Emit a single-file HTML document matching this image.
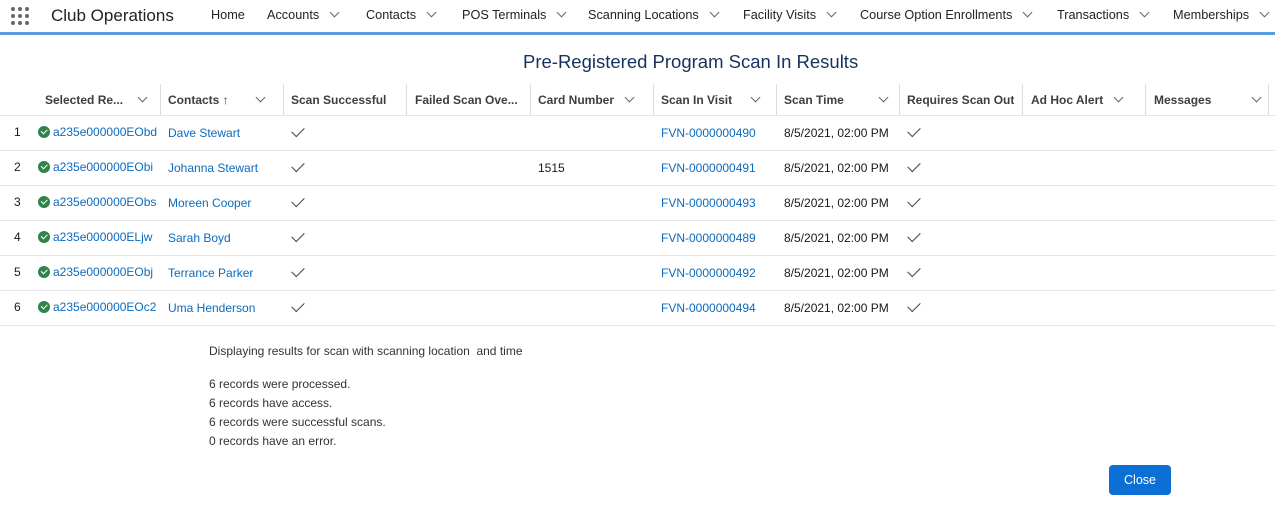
<html><head><style>
body{margin:0;width:1275px;height:510px;background:#fff;font-family:"Liberation Sans",sans-serif;position:relative;overflow:hidden;color:#181818}
.a{position:absolute;white-space:nowrap}
.nav{font-size:12.7px;color:#222;top:8px}
.chev{display:inline-block;width:6px;height:6px;border-right:1.3px solid #666;border-bottom:1.3px solid #666;transform:rotate(45deg);margin-left:12px;position:relative;top:-3px}
.h{font-size:12px;font-weight:bold;color:#3e3e3c;top:93px}
.vl{position:absolute;top:84px;height:32px;width:1px;background:#ddd}
.hl{position:absolute;left:0;width:1275px;height:1px;background:#e5e5e5}
.c{font-size:12px;position:absolute}
.lk{color:#0b6bbf}
.ck{position:absolute;width:11px;height:6px;border-left:1.5px solid #444;border-bottom:1.5px solid #444;transform:rotate(-45deg)}
.ok{display:inline-block;width:12px;height:12px;border-radius:50%;background:#2e844a;vertical-align:-2px;margin-right:3px;position:relative}
.ok:after{content:"";position:absolute;left:3px;top:3px;width:5px;height:2.5px;border-left:1.5px solid #fff;border-bottom:1.5px solid #fff;transform:rotate(-45deg)}
.t{font-size:12px;color:#333}
</style></head><body>
<svg class="a" style="left:10px;top:6px" width="22" height="20"><g fill="#666"><circle cx="3" cy="3" r="2"/><circle cx="10" cy="3" r="2"/><circle cx="17" cy="3" r="2"/><circle cx="3" cy="10" r="2"/><circle cx="10" cy="10" r="2"/><circle cx="17" cy="10" r="2"/><circle cx="3" cy="17" r="2"/><circle cx="10" cy="17" r="2"/><circle cx="17" cy="17" r="2"/></g></svg>
<div class="a" style="left:51px;top:6px;font-size:17px;color:#222">Club Operations</div>
<div class="a nav" style="left:211px">Home</div>
<div class="a nav" style="left:267px">Accounts<span class="chev"></span></div>
<div class="a nav" style="left:366px">Contacts<span class="chev"></span></div>
<div class="a nav" style="left:462px">POS Terminals<span class="chev"></span></div>
<div class="a nav" style="left:588px">Scanning Locations<span class="chev"></span></div>
<div class="a nav" style="left:743px">Facility Visits<span class="chev"></span></div>
<div class="a nav" style="left:860px">Course Option Enrollments<span class="chev"></span></div>
<div class="a nav" style="left:1057px">Transactions<span class="chev"></span></div>
<div class="a nav" style="left:1173px">Memberships<span class="chev"></span></div>
<div class="a" style="left:0;top:32px;width:1275px;height:3px;background:#5a9be0"></div>
<div class="a" style="left:523px;top:51px;font-size:18.5px;color:#16325c">Pre-Registered Program Scan In Results</div>
<div class="a h" style="left:45px">Selected Re...<span class="chev" style="margin-left:16px"></span></div>
<div class="a h" style="left:168px">Contacts ↑<span class="chev" style="margin-left:28px"></span></div>
<div class="a h" style="left:291px">Scan Successful</div>
<div class="a h" style="left:415px">Failed Scan Ove...</div>
<div class="a h" style="left:538px">Card Number<span class="chev"></span></div>
<div class="a h" style="left:661px">Scan In Visit<span class="chev" style="margin-left:20px"></span></div>
<div class="a h" style="left:784px">Scan Time<span class="chev" style="margin-left:36px"></span></div>
<div class="a h" style="left:907px">Requires Scan Out</div>
<div class="a h" style="left:1031px">Ad Hoc Alert<span class="chev"></span></div>
<div class="a h" style="left:1154px">Messages<span class="chev" style="margin-left:42px"></span></div>
<div class="vl" style="left:160px"></div><div class="vl" style="left:283px"></div><div class="vl" style="left:406px"></div><div class="vl" style="left:530px"></div><div class="vl" style="left:653px"></div><div class="vl" style="left:776px"></div><div class="vl" style="left:899px"></div><div class="vl" style="left:1022px"></div><div class="vl" style="left:1145px"></div><div class="vl" style="left:1268px"></div>
<div class="hl" style="top:115px"></div><div class="hl" style="top:150px"></div><div class="hl" style="top:185px"></div><div class="hl" style="top:220px"></div><div class="hl" style="top:255px"></div><div class="hl" style="top:290px"></div><div class="hl" style="top:325px"></div>

<div class="c" style="left:14px;top:125px">1</div><div class="c lk" style="left:38px;top:125px"><span class="ok"></span>a235e000000EObd</div><div class="c lk" style="left:168px;top:126px">Dave Stewart</div><div class="ck" style="left:292px;top:127px"></div><div class="c lk" style="left:661px;top:126px">FVN-0000000490</div><div class="c" style="left:784px;top:126px">8/5/2021, 02:00 PM</div><div class="ck" style="left:908px;top:127px"></div>
<div class="c" style="left:14px;top:160px">2</div><div class="c lk" style="left:38px;top:160px"><span class="ok"></span>a235e000000EObi</div><div class="c lk" style="left:168px;top:161px">Johanna Stewart</div><div class="ck" style="left:292px;top:162px"></div><div class="c" style="left:538px;top:161px">1515</div><div class="c lk" style="left:661px;top:161px">FVN-0000000491</div><div class="c" style="left:784px;top:161px">8/5/2021, 02:00 PM</div><div class="ck" style="left:908px;top:162px"></div>
<div class="c" style="left:14px;top:195px">3</div><div class="c lk" style="left:38px;top:195px"><span class="ok"></span>a235e000000EObs</div><div class="c lk" style="left:168px;top:196px">Moreen Cooper</div><div class="ck" style="left:292px;top:197px"></div><div class="c lk" style="left:661px;top:196px">FVN-0000000493</div><div class="c" style="left:784px;top:196px">8/5/2021, 02:00 PM</div><div class="ck" style="left:908px;top:197px"></div>
<div class="c" style="left:14px;top:230px">4</div><div class="c lk" style="left:38px;top:230px"><span class="ok"></span>a235e000000ELjw</div><div class="c lk" style="left:168px;top:231px">Sarah Boyd</div><div class="ck" style="left:292px;top:232px"></div><div class="c lk" style="left:661px;top:231px">FVN-0000000489</div><div class="c" style="left:784px;top:231px">8/5/2021, 02:00 PM</div><div class="ck" style="left:908px;top:232px"></div>
<div class="c" style="left:14px;top:265px">5</div><div class="c lk" style="left:38px;top:265px"><span class="ok"></span>a235e000000EObj</div><div class="c lk" style="left:168px;top:266px">Terrance Parker</div><div class="ck" style="left:292px;top:267px"></div><div class="c lk" style="left:661px;top:266px">FVN-0000000492</div><div class="c" style="left:784px;top:266px">8/5/2021, 02:00 PM</div><div class="ck" style="left:908px;top:267px"></div>
<div class="c" style="left:14px;top:300px">6</div><div class="c lk" style="left:38px;top:300px"><span class="ok"></span>a235e000000EOc2</div><div class="c lk" style="left:168px;top:301px">Uma Henderson</div><div class="ck" style="left:292px;top:302px"></div><div class="c lk" style="left:661px;top:301px">FVN-0000000494</div><div class="c" style="left:784px;top:301px">8/5/2021, 02:00 PM</div><div class="ck" style="left:908px;top:302px"></div>

<div class="a t" style="left:209px;top:344px">Displaying results for scan with scanning location &nbsp;and time</div>
<div class="a t" style="left:209px;top:377px">6 records were processed.</div>
<div class="a t" style="left:209px;top:396px">6 records have access.</div>
<div class="a t" style="left:209px;top:415px">6 records were successful scans.</div>
<div class="a t" style="left:209px;top:434px">0 records have an error.</div>
<div class="a" style="left:1109px;top:465px;width:62px;height:30px;background:#0b6fd6;border-radius:4px;color:#fff;font-size:12.5px;text-align:center;line-height:30px">Close</div>
</body></html>
